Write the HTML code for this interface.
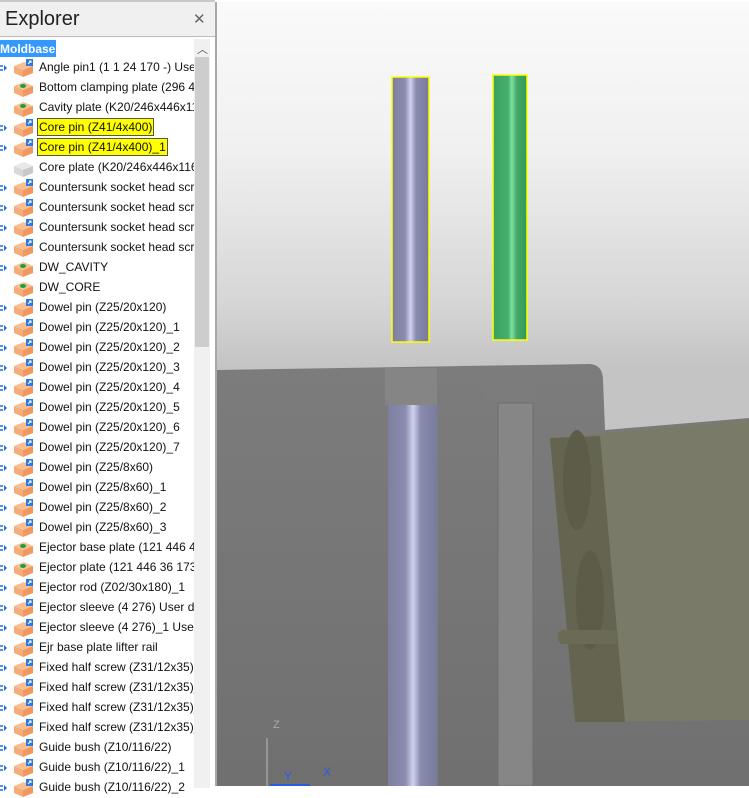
<!DOCTYPE html>
<html><head><meta charset="utf-8"><style>
*{margin:0;padding:0;box-sizing:border-box}
body{width:749px;height:786px;overflow:hidden;background:#fff;font-family:"Liberation Sans",sans-serif;position:relative}
#panel{position:absolute;left:0;top:0;width:215px;height:786px;background:#fff;border-top:2px solid #c8c8c8}
#hdr{position:absolute;left:0;top:0;width:215px;height:35px;background:#f0f0f0;border-bottom:1px solid #bcbcbc}
#hdr span{position:absolute;left:5px;top:6px;font-size:20px;color:#222}
#hdr b{position:absolute;left:193px;top:8px;font-size:15px;color:#666;font-weight:normal}
#track{position:absolute;left:194px;top:37px;width:16px;height:749px;background:#f0f0f0}
#thumb{position:absolute;left:195px;top:55px;width:14px;height:290px;background:#cdcdcd}
#up{position:absolute;left:197px;top:39px;font-size:11px;color:#555}
#mb{position:absolute;left:0;top:38px;height:17px;background:#3399ff;color:#fff;font-size:12px;font-weight:bold;padding:1px 1px 0 0;line-height:16px}
.row{position:absolute;left:0;height:20px;width:194px;overflow:hidden;white-space:nowrap}
.row .t{position:absolute;left:39px;top:1px;font-size:12px;line-height:16px;color:#111}
.row .t.hl{background:#ffff00;outline:1px solid #555;padding:0 1px;left:38px}
.row svg{position:absolute;left:0;top:0}
#vp{position:absolute;left:215px;top:2px;width:534px;height:784px;border-left:2px solid #a8a8a8;background:linear-gradient(#fafafa,#f0f0f0 150px,#d6d6d6 300px,#c4c4c4 365px);overflow:hidden}
#vp svg{position:absolute;left:-2px;top:0}
</style></head><body>
<div id="panel">
<div id="hdr"><span>Explorer</span><b>✕</b></div>
<div id="track"></div><div id="thumb"></div><div id="up">︿</div>
<div id="mb">Moldbase</div>
<div id="rows"></div>
</div>
<div id="vp">
<svg width="534" height="784" viewBox="215 2 534 784">
<defs>
<linearGradient id="gp" x1="0" x2="1"><stop offset="0" stop-color="#7f80a0"/><stop offset=".35" stop-color="#8a8cb0"/><stop offset=".5" stop-color="#d0d2f0"/><stop offset=".65" stop-color="#8a8cb0"/><stop offset="1" stop-color="#787a98"/></linearGradient>
<linearGradient id="gg" x1="0" x2="1"><stop offset="0" stop-color="#3aa060"/><stop offset=".45" stop-color="#45b070"/><stop offset=".55" stop-color="#80e0a0"/><stop offset=".7" stop-color="#42a868"/><stop offset="1" stop-color="#369858"/></linearGradient>
<linearGradient id="gb" x1="0" y1="0" x2="0" y2="1"><stop offset="0" stop-color="#7c7c7c"/><stop offset="1" stop-color="#707070"/></linearGradient>
</defs>
<rect x="392" y="77" width="37" height="265" fill="url(#gp)" stroke="#ffff00" stroke-width="1.5"/>
<rect x="493" y="75" width="34" height="265" fill="url(#gg)" stroke="#ffff00" stroke-width="1.5"/>
<path d="M216 370 L590 364 Q603 365 603 380 L605 430 L749 418 L749 786 L216 786Z" fill="url(#gb)"/>
<rect x="385" y="368" width="52" height="37" fill="#858585"/>
<rect x="484" y="367" width="50" height="35" fill="#7c7c7c"/>
<rect x="388" y="405" width="50" height="381" fill="url(#gp)"/>
<rect x="498" y="403" width="35" height="383" fill="#868686" stroke="#6e6e6e"/>
<path d="M550 438 L749 420 L749 720 L575 722Z" fill="#7a7a68"/>
<path d="M550 438 L600 436 L625 722 L575 722Z" fill="#646450"/>
<ellipse cx="577" cy="480" rx="14" ry="50" fill="#5c5c48"/>
<ellipse cx="590" cy="600" rx="14" ry="50" fill="#5c5c48"/>
<rect x="558" y="630" width="60" height="14" rx="5" fill="#6a6a55"/>
<text x="273" y="728" font-size="11" fill="#aaa" font-family="Liberation Sans">Z</text>
<line x1="267" y1="738" x2="267" y2="786" stroke="#bbb"/>
<text x="284" y="780" font-size="12" fill="#2a5ae0" font-family="Liberation Sans">Y</text>
<text x="323" y="776" font-size="12" fill="#2a5ae0" font-family="Liberation Sans">X</text>
<line x1="270" y1="785" x2="310" y2="785" stroke="#2a5ae0" stroke-width="2"/>
</svg>
</div>
<script>
var items=[["Angle pin1 (1 1 24 170 -) User",1,"l"],["Bottom clamping plate (296 4",0,"g"],["Cavity plate (K20/246x446x116",0,"g"],["Core pin (Z41/4x400)",1,"l",1],["Core pin (Z41/4x400)_1",1,"l",1],["Core plate (K20/246x446x116/",0,"w"],["Countersunk socket head scre",1,"l"],["Countersunk socket head scre",1,"l"],["Countersunk socket head scre",1,"l"],["Countersunk socket head scre",1,"l"],["DW_CAVITY",1,"g"],["DW_CORE",0,"g"],["Dowel pin (Z25/20x120)",1,"l"],["Dowel pin (Z25/20x120)_1",1,"l"],["Dowel pin (Z25/20x120)_2",1,"l"],["Dowel pin (Z25/20x120)_3",1,"l"],["Dowel pin (Z25/20x120)_4",1,"l"],["Dowel pin (Z25/20x120)_5",1,"l"],["Dowel pin (Z25/20x120)_6",1,"l"],["Dowel pin (Z25/20x120)_7",1,"l"],["Dowel pin (Z25/8x60)",1,"l"],["Dowel pin (Z25/8x60)_1",1,"l"],["Dowel pin (Z25/8x60)_2",1,"l"],["Dowel pin (Z25/8x60)_3",1,"l"],["Ejector base plate (121 446 40",1,"g"],["Ejector plate (121 446 36 1730",1,"g"],["Ejector rod (Z02/30x180)_1",1,"l"],["Ejector sleeve (4 276) User def",1,"l"],["Ejector sleeve (4 276)_1 User d",1,"l"],["Ejr base plate lifter rail",1,"l"],["Fixed half screw (Z31/12x35)",1,"l"],["Fixed half screw (Z31/12x35)_1",1,"l"],["Fixed half screw (Z31/12x35)_2",1,"l"],["Fixed half screw (Z31/12x35)_3",1,"l"],["Guide bush (Z10/116/22)",1,"l"],["Guide bush (Z10/116/22)_1",1,"l"],["Guide bush (Z10/116/22)_2",1,"l"]];
var h="";
items.forEach(function(it,i){
var y=56+i*20;
var top=it[2]=="w"?"#e8e8e8":"#f8c090",side=it[2]=="w"?"#c8c8c8":"#f09860",front=it[2]=="w"?"#d8d8d8":"#f4ac78";
var s='<svg width="36" height="20">';
if(it[1])s+='<path d="M0 8h3M0 12h3" stroke="#1e6ee8" stroke-width="1.5"/><path d="M4 7l3 3-3 3z" fill="#1e6ee8"/>';
s+='<path d="M14 8 L24 4 L33 8 L23 12Z" fill="'+top+'"/><path d="M14 8 L23 12 L23 19 L14 15Z" fill="'+front+'"/><path d="M23 12 L33 8 L33 15 L23 19Z" fill="'+side+'"/>';
if(it[2]=="g")s+='<ellipse cx="23" cy="8" rx="3" ry="2" fill="#1aa040"/>';
if(it[2]=="l")s+='<rect x="26" y="1" width="7" height="7" fill="#2a78e0"/><path d="M28 6l3-3M29 3h2v2" stroke="#fff" stroke-width="1" fill="none"/>';
s+='</svg>';
h+='<div class="row" style="top:'+y+'px">'+s+'<span class="t'+(it[3]?' hl':'')+'">'+it[0]+'</span></div>';
});
document.getElementById("rows").innerHTML=h;
</script>
</body></html>
